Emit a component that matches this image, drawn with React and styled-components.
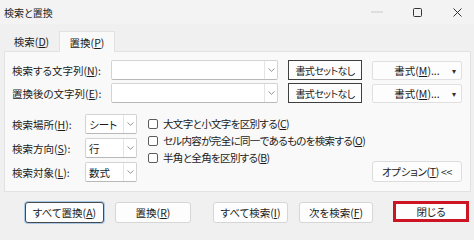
import React from "react";
import styled, { createGlobalStyle } from "styled-components";

const GlobalStyle = createGlobalStyle`
  html, body {
    margin: 0;
    padding: 0;
  }
  body {
    width: 474px;
    height: 227px;
    overflow: hidden;
    background: #f0f0f0;
    font-family: "Noto Sans CJK JP", "Noto Sans", sans-serif;
    font-size: 10.5px;
    color: #1b1b1b;
    font-feature-settings: "palt" 1;
    font-kerning: normal;
  }
  u {
    text-underline-offset: 1px;
  }
`;

function Chevron() {
  return (
    <svg width="7" height="4" viewBox="0 0 7 4">
      <path d="M0.5 0.5 L3.5 3.3 L6.5 0.5" fill="none" stroke="#8a8a8a" strokeWidth="0.9" />
    </svg>
  );
}

function App() {
  return (
    <Window>
      <GlobalStyle />
      <TitleBar>
        <Title>検索と置換</Title>
        <Controls>
          <ControlButton>
            <svg width="12" height="2" viewBox="0 0 12 2">
              <path d="M0 1 H12" stroke="#c9c9c9" strokeWidth="1" />
            </svg>
          </ControlButton>
          <ControlButton>
            <svg width="9" height="9" viewBox="0 0 9 9">
              <rect x="0.5" y="0.5" width="8" height="8" rx="1" fill="none" stroke="#333" strokeWidth="1" />
            </svg>
          </ControlButton>
          <ControlButton>
            <svg width="9" height="9" viewBox="0 0 9 9">
              <path d="M0.5 0.5 L8.5 8.5 M8.5 0.5 L0.5 8.5" stroke="#333" strokeWidth="1" />
            </svg>
          </ControlButton>
        </Controls>
      </TitleBar>

      <Body>
        <TabStrip>
          <Tab>
            検索(<u>D</u>)
          </Tab>
          <Tab $active>
            置換(<u>P</u>)
          </Tab>
        </TabStrip>

        <Panel>
          <TextRows>
            <Row>
              <Label $width={99}>
                検索する文字列(<u>N</u>):
              </Label>
              <Combo $width={167}>
                <ComboText />
                <ComboArrow>
                  <Chevron />
                </ComboArrow>
              </Combo>
              <NoFormatButton>書式セットなし</NoFormatButton>
              <FormatButton>
                <span>
                  書式(<u>M</u>)...
                </span>
                <Caret>▾</Caret>
              </FormatButton>
            </Row>
            <Row>
              <Label $width={99}>
                置換後の文字列(<u>E</u>):
              </Label>
              <Combo $width={167}>
                <ComboText />
                <ComboArrow>
                  <Chevron />
                </ComboArrow>
              </Combo>
              <NoFormatButton>書式セットなし</NoFormatButton>
              <FormatButton>
                <span>
                  書式(<u>M</u>)...
                </span>
                <Caret>▾</Caret>
              </FormatButton>
            </Row>
          </TextRows>

          <Options>
            <SelectColumn>
              <Row>
                <Label $width={73}>
                  検索場所(<u>H</u>):
                </Label>
                <Combo $width={52}>
                  <ComboText>シート</ComboText>
                  <ComboArrow>
                    <Chevron />
                  </ComboArrow>
                </Combo>
              </Row>
              <Row>
                <Label $width={73}>
                  検索方向(<u>S</u>):
                </Label>
                <Combo $width={52}>
                  <ComboText>行</ComboText>
                  <ComboArrow>
                    <Chevron />
                  </ComboArrow>
                </Combo>
              </Row>
              <Row>
                <Label $width={73}>
                  検索対象(<u>L</u>):
                </Label>
                <Combo $width={52}>
                  <ComboText>数式</ComboText>
                  <ComboArrow>
                    <Chevron />
                  </ComboArrow>
                </Combo>
              </Row>
            </SelectColumn>

            <CheckList>
              <CheckRow>
                <Box />
                大文字と小文字を区別する(<u>C</u>)
              </CheckRow>
              <CheckRow>
                <Box />
                セル内容が完全に同一であるものを検索する(<u>O</u>)
              </CheckRow>
              <CheckRow>
                <Box />
                半角と全角を区別する(<u>B</u>)
              </CheckRow>
            </CheckList>

            <OptionButton>
              オプション(<u>T</u>) &lt;&lt;
            </OptionButton>
          </Options>
        </Panel>

        <Footer>
          <FooterButton $width={79} $focused>
            すべて置換(<u>A</u>)
          </FooterButton>
          <FooterButton $width={76} $gap={11}>
            置換(<u>R</u>)
          </FooterButton>
          <FooterButton $width={75} $gap={22}>
            すべて検索(<u>I</u>)
          </FooterButton>
          <FooterButton $width={74} $gap={11}>
            次を検索(<u>F</u>)
          </FooterButton>
          <FooterButton $width={76} $gap={20} $marked>
            閉じる
          </FooterButton>
        </Footer>
      </Body>
    </Window>
  );
}

export default App;

const Window = styled.div`
  width: 474px;
  height: 227px;
  display: flex;
  flex-direction: column;
  overflow: hidden;
  background: #f0f0f0;
`;

const TitleBar = styled.div`
  height: 24px;
  display: flex;
  align-items: center;
  justify-content: space-between;
  padding-left: 4px;
  background: #f3f3f3;
`;

const Title = styled.div`
  font-size: 10px;
  color: #222;
`;

const Controls = styled.div`
  display: flex;
  height: 100%;
  margin-right: -3px;
`;

const ControlButton = styled.div`
  width: 40px;
  height: 100%;
  display: flex;
  align-items: center;
  justify-content: center;
`;

const Body = styled.div`
  flex: 1;
  display: flex;
  flex-direction: column;
  padding: 0 3px 0 4px;
`;

const TabStrip = styled.div`
  display: flex;
  align-items: flex-end;
  height: 20px;
  margin-top: 7px;
  position: relative;
  z-index: 1;
`;

const Tab = styled.div`
  height: ${(p) => (p.$active ? "21px" : "20px")};
  box-sizing: border-box;
  display: flex;
  align-items: center;
  justify-content: center;
  white-space: nowrap;
  width: ${(p) => (p.$active ? "56px" : "55px")};
  margin-bottom: ${(p) => (p.$active ? "-1px" : "0")};
  background: ${(p) => (p.$active ? "#f9f9f9" : "transparent")};
  border: 1px solid ${(p) => (p.$active ? "#e2e2e2" : "transparent")};
  border-bottom: none;
  color: #1b1b1b;
`;

const Panel = styled.div`
  height: 141px;
  box-sizing: border-box;
  border: 1px solid #e2e2e2;
  background: #f9f9f9;
  padding: 8px 8px 0 7px;
  display: flex;
  flex-direction: column;
`;

const TextRows = styled.div`
  display: flex;
  flex-direction: column;
  gap: 3px;
`;

const Row = styled.div`
  display: flex;
  align-items: center;
  height: 20px;
`;

const Label = styled.div`
  width: ${(p) => p.$width}px;
  flex-shrink: 0;
  white-space: nowrap;
`;

const Combo = styled.div`
  width: ${(p) => p.$width}px;
  height: 20px;
  box-sizing: border-box;
  display: flex;
  border: 1px solid #d3d3d3;
  border-bottom-color: #b8b8b8;
  border-radius: 2px;
  background: #fff;
  flex-shrink: 0;
`;

const ComboText = styled.div`
  flex: 1;
  display: flex;
  align-items: center;
  padding-left: 3px;
  white-space: nowrap;
`;

const ComboArrow = styled.div`
  width: 12px;
  display: flex;
  align-items: center;
  justify-content: center;
  border-left: 1px solid #e4e4e4;
`;

const NoFormatButton = styled.div`
  margin-left: 10px;
  width: 74px;
  height: 20px;
  box-sizing: border-box;
  border: 1px solid #3f3f3f;
  background: #fdfdfd;
  display: flex;
  align-items: center;
  justify-content: center;
  white-space: nowrap;
  font-size: 10px;
  letter-spacing: -0.6px;
`;

const FormatButton = styled.div`
  margin-left: 10px;
  width: 90px;
  height: 19px;
  box-sizing: border-box;
  border: 1px solid #e0e0e0;
  border-radius: 2px;
  background: #fdfdfd;
  display: flex;
  align-items: center;
  justify-content: center;
  position: relative;
  white-space: nowrap;
`;

const Caret = styled.span`
  position: absolute;
  right: 5px;
  font-size: 8px;
  color: #333;
`;

const Options = styled.div`
  display: flex;
  margin-top: 11px;
`;

const SelectColumn = styled.div`
  display: flex;
  flex-direction: column;
  gap: 4px;
`;

const CheckList = styled.div`
  display: flex;
  flex-direction: column;
  margin-left: 11px;
  margin-top: 1px;
`;

const CheckRow = styled.div`
  display: flex;
  align-items: center;
  height: 17px;
  white-space: nowrap;
  letter-spacing: -0.65px;
`;

const Box = styled.span`
  width: 10px;
  height: 10px;
  box-sizing: border-box;
  border: 1px solid #5c5c5c;
  border-radius: 2px;
  background: #fff;
  margin-right: 5px;
  flex-shrink: 0;
`;

const OptionButton = styled.div`
  margin-left: auto;
  align-self: flex-end;
  width: 90px;
  height: 21px;
  box-sizing: border-box;
  border: 1px solid #dcdcdc;
  border-radius: 3px;
  background: #fdfdfd;
  display: flex;
  align-items: center;
  justify-content: center;
  white-space: nowrap;
  letter-spacing: -0.3px;
`;

const Footer = styled.div`
  display: flex;
  margin-top: 10px;
  padding-left: 21px;
`;

const FooterButton = styled.div`
  width: ${(p) => p.$width}px;
  height: 21px;
  margin-left: ${(p) => p.$gap || 0}px;
  box-sizing: border-box;
  display: flex;
  align-items: center;
  justify-content: center;
  white-space: nowrap;
  background: #fdfdfd;
  border: ${(p) =>
    p.$marked ? "3px solid #cc1424" : p.$focused ? "1px solid #4a4a4a" : "1px solid #d6d6d6"};
  border-radius: ${(p) => (p.$marked ? "0" : "3px")};
  box-shadow: ${(p) => (p.$focused ? "0 0 0 1px #a8c8e8" : "none")};
  margin-top: ${(p) => (p.$marked ? "-1px" : "0")};
`;
